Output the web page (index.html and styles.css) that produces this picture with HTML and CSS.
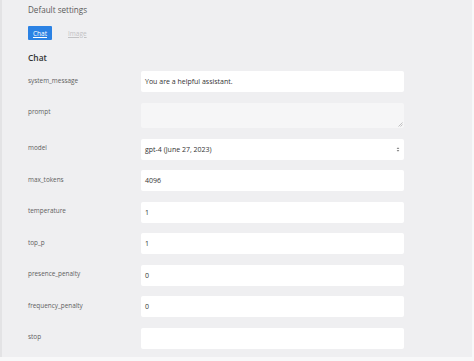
FILE: index.html
```html
<!DOCTYPE html>
<html>
<head>
<meta charset="utf-8">
<link rel="stylesheet" href="styles.css">
</head>
<body>
<div class="panel">
  <div class="title">Default settings</div>
  <div class="tabs">
    <a class="tab tab-active">Chat</a>
    <a class="tab tab-idle">Image</a>
  </div>
  <div class="heading">Chat</div>
  <div class="form">
    <label class="lbl">system_message</label>
    <div class="field">You are a helpful assistant.</div>
    <label class="lbl">prompt</label>
    <div class="area-wrap">
      <textarea class="area"></textarea>
      <svg class="grip" width="5" height="5" viewBox="0 0 5 5"><path d="M0.5 4.5 L4.5 0.5 M2.5 4.5 L4.5 2.5" stroke="#aaa" stroke-width="0.7"/></svg>
    </div>
    <label class="lbl">model</label>
    <div class="field select"><span>gpt-4 (June 27, 2023)</span>
      <svg class="arrows" width="4" height="7" viewBox="0 0 4 7"><path d="M0.6 3 L2 1.2 L3.4 3 Z M0.6 4 L2 5.8 L3.4 4 Z" fill="#888"/></svg>
    </div>
    <label class="lbl">max_tokens</label>
    <div class="field">4096</div>
    <label class="lbl">temperature</label>
    <div class="field">1</div>
    <label class="lbl">top_p</label>
    <div class="field">1</div>
    <label class="lbl">presence_penalty</label>
    <div class="field">0</div>
    <label class="lbl">frequency_penalty</label>
    <div class="field">0</div>
    <label class="lbl">stop</label>
    <div class="field"></div>
  </div>
</div>
</body>
</html>
```

FILE: styles.css
```css
html, body {
  margin: 0;
  padding: 0;
  background: #f8f8f9;
  font-family: "Open Sans", "Noto Sans", sans-serif;
}
.panel {
  box-sizing: border-box;
  width: 472px;
  height: 357px;
  background: #efeff1;
  border-left: 2px solid #e3e3e5;
  padding: 3px 0 0 26px;
}
.title {
  font-size: 8.1px;
  line-height: 14px;
  color: #5a5a5a;
}
.tabs {
  display: flex;
  align-items: center;
  margin-top: 9px;
  height: 14px;
}
.tab {
  font-size: 6.5px;
  text-decoration: underline;
}
.tab-active {
  display: flex;
  align-items: center;
  justify-content: center;
  width: 24px;
  height: 14px;
  background: #2b82e4;
  color: #fff;
  border-radius: 1px;
}
.tab-idle {
  margin-left: 16px;
  color: #c2c2c4;
}
.heading {
  margin-top: 11px;
  font-size: 8.4px;
  line-height: 14px;
  font-weight: 600;
  color: #333;
}
.form {
  margin-top: 6px;
  display: grid;
  grid-template-columns: 113px 263px;
  row-gap: 10.5px;
}
.lbl {
  font-size: 6.4px;
  line-height: 10px;
  padding-top: 4.5px;
  color: #606060;
}
.field {
  box-sizing: border-box;
  height: 21px;
  background: #fff;
  border-radius: 2px;
  padding: 0 4px;
  display: flex;
  align-items: center;
  font-size: 7px;
  color: #333;
}
.select {
  justify-content: space-between;
}
.area-wrap {
  position: relative;
  height: 25.5px;
}
.area {
  display: block;
  box-sizing: border-box;
  height: 25.5px;
  width: 263px;
  margin: 0;
  border: none;
  border-radius: 2px;
  background: #f6f6f7;
  resize: none;
  outline: none;
}
.grip {
  position: absolute;
  right: 1px;
  bottom: 1px;
}
```
